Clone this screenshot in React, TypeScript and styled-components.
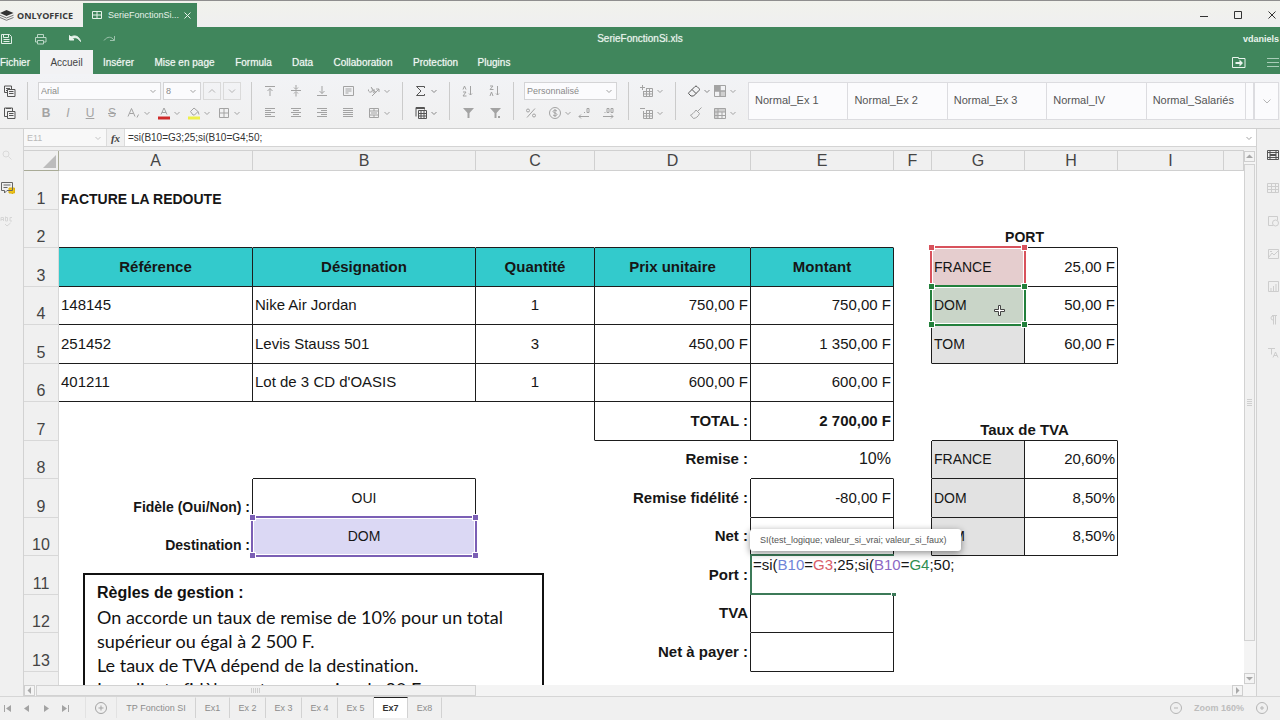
import React from 'react';
import styled, { createGlobalStyle, css } from 'styled-components';

const ui = '"Liberation Sans", Arial, sans-serif';

const Global = createGlobalStyle`
  *, *::before, *::after { box-sizing: border-box; }
  body { margin: 0; background: #f0f0f0; font-family: ${ui}; }
  button, input, select { font: inherit; color: inherit; margin: 0; }
  button { border: 0; padding: 0; background: none; }
`;

const Shell = styled.div`
  height: 100vh;
  min-height: 480px;
  display: flex;
  flex-direction: column;
  overflow: hidden;
  color: #444;
`;

/* ---------- icons ---------- */

type IconProps = { d: string; size?: number; color?: string; fill?: string; extra?: React.ReactNode; w?: number };

const Svg = styled.svg`
  display: block;
  flex: none;
`;

const Icon = ({ d, size = 14, color = '#a3a3a3', fill = 'none', extra, w = 1 }: IconProps) => (
  <Svg width={size} height={size} viewBox={`0 0 ${size} ${size}`} fill={fill} stroke={color} strokeWidth={w} aria-hidden="true">
    {extra}
    <path d={d} />
  </Svg>
);

const Caret = ({ color = '#a3a3a3' }: { color?: string }) => (
  <Svg width="8" height="8" viewBox="0 0 8 8" fill="none" stroke={color} aria-hidden="true">
    <path d="M1.5 3 4 5.5 6.5 3" />
  </Svg>
);

/* ---------- window title bar ---------- */

const TitleBar = styled.header`
  flex: none;
  height: 27px;
  border-top: 1px solid #8e8e8e;
  background: linear-gradient(#f1f2ec, #efeff0);
  display: flex;
  align-items: stretch;
`;

const Brand = styled.div`
  width: 83px;
  display: flex;
  align-items: center;
  gap: 3px;
  padding-top: 2px;
  font: 700 9px "Open Sans", sans-serif;
  color: #3a3a3a;
`;

const DocTab = styled.div`
  width: 114px;
  margin-top: 2px;
  padding: 0 6px 0 7px;
  background: #40865c;
  color: #e6f2ea;
  display: flex;
  align-items: center;
  gap: 4px;
  font-size: 9px;
  white-space: nowrap;
  span { flex: 1; }
`;

const WindowButtons = styled.div`
  margin-left: auto;
  display: flex;
  align-items: center;
  gap: 20px;
  padding: 2px 1px 0 0;
`;

/* ---------- green header ---------- */

const Header = styled.div`
  flex: none;
  background: #40865c;
  color: #e9f4ed;
`;

const QuickRow = styled.div`
  height: 23px;
  display: grid;
  grid-template-columns: 1fr auto 1fr;
  align-items: center;
`;

const QuickActions = styled.div`
  display: flex;
  gap: 20px;
`;

const DocName = styled.div`
  font-size: 10px;
  text-shadow: 0 0 1px rgba(255, 255, 255, 0.6);
`;

const User = styled.div`
  justify-self: end;
  padding-right: 1px;
  font-size: 9px;
  font-weight: 700;
`;

const TabRow = styled.nav`
  height: 24px;
  display: flex;
`;

const RibbonTab = styled.button<{ $active?: boolean; $first?: boolean; $w: number }>`
  width: ${p => p.$w}px;
  text-align: ${p => (p.$first ? 'left' : 'center')};
  font-size: 10px;
  color: #f2f8f4;
  text-shadow: 0 0 1px rgba(255, 255, 255, 0.6);
  ${p => p.$active && css`
    background: #f2f2f4;
    color: #444;
    text-shadow: none;
  `}
`;

const TabActions = styled.div`
  margin-left: auto;
  display: flex;
  align-items: center;
  gap: 19px;
`;

/* ---------- toolbar ---------- */

const Toolbar = styled.div`
  flex: none;
  height: 55px;
  display: flex;
  align-items: flex-start;
  padding-top: 6px;
  background: linear-gradient(#f2f3f6, #f0f0f0);
  border-bottom: 1px solid #cfcfcf;
`;

const Group = styled.div<{ $w: number; $pad: number }>`
  flex: none;
  width: ${p => p.$w}px;
  padding-left: ${p => p.$pad}px;
`;

const ToolRow = styled.div<{ $gap?: number; $pad?: number }>`
  height: 22px;
  display: flex;
  align-items: center;
  gap: ${p => p.$gap ?? 0}px;
  padding-left: ${p => p.$pad ?? 0}px;
`;

const Separator = styled.div`
  flex: none;
  width: 1px;
  height: 38px;
  margin-top: 2px;
  background: #cbcbcb;
`;

const Tool = styled.button<{ $w: number }>`
  width: ${p => p.$w}px;
  height: 20px;
  display: flex;
  align-items: center;
  justify-content: center;
  font-size: 12px;
  color: #a3a3a3;
`;

const IconBox = styled.span`
  width: 18px;
  display: flex;
  justify-content: center;
`;

const Split = ({ w = 30, label, caret, children }: { w?: number; label: string; caret?: string; children: React.ReactNode }) => (
  <Tool $w={w} aria-label={label}>
    <IconBox>{children}</IconBox>
    <Caret color={caret} />
  </Tool>
);

const Combo = styled.label<{ $w: number }>`
  width: ${p => p.$w}px;
  height: 18px;
  display: flex;
  align-items: center;
  padding-right: 3px;
  border: 1px solid #d4d4d6;
  background: #fbfbfd;
  color: #8a8a8a;
  font-size: 9px;
  select {
    flex: 1;
    min-width: 0;
    appearance: none;
    border: 0;
    padding: 0 0 0 2px;
    background: none;
    outline: 0;
  }
`;

const StepButton = styled.button`
  width: 18px;
  height: 18px;
  display: grid;
  place-items: center;
  border: 1px solid #dadada;
`;

const Gallery = styled.div`
  flex: 1;
  min-width: 0;
  height: 38px;
  margin-top: 2px;
  display: flex;
  border: 1px solid #dcdce0;
  background: #fbfbfd;
`;

const StyleCell = styled.button`
  flex: 1 1 0;
  padding: 0 0 2px 6px;
  text-align: left;
  font-size: 11px;
  color: #555;
  white-space: nowrap;
  border-right: 1px solid #dcdce0;
`;

const GalleryMore = styled.button`
  width: 25px;
  height: 38px;
  margin: 2px 1px 0 0;
  display: grid;
  place-items: center;
  border: 1px solid #dcdce0;
  background: #fbfbfd;
`;

/* ---------- work area ---------- */

const Work = styled.div`
  flex: 1;
  min-height: 0;
  display: flex;
`;

const SidePanel = styled.aside<{ $side: 'left' | 'right' }>`
  flex: none;
  width: 23px;
  padding-top: 17px;
  padding-left: ${p => (p.$side === 'left' ? 0 : 9)}px;
  display: flex;
  flex-direction: column;
  gap: 16px;
  background: #f0f0f0;
  overflow: hidden;
  button { height: 17px; flex: none; display: flex; align-items: center; }
`;

const Center = styled.main`
  flex: 1;
  min-width: 0;
  display: flex;
  flex-direction: column;
  border-left: 1px solid #d2d2d2;
  border-right: 1px solid #d2d2d2;
`;

const FormulaBar = styled.div`
  flex: none;
  height: 18px;
  margin-bottom: 3px;
  display: flex;
  border-bottom: 1px solid #d4d4d4;
`;

const NameBox = styled.label`
  width: 82px;
  display: flex;
  align-items: center;
  padding-right: 4px;
  background: #f8f8f8;
  color: #b8b8b8;
  font-size: 9px;
  input { flex: 1; min-width: 0; border: 0; background: none; outline: 0; padding: 0 0 0 3px; }
`;

const FxButton = styled.button`
  width: 19px;
  border-left: 1px solid #dcdcdc;
  border-right: 1px solid #dcdcdc;
  font: italic 700 11px "Liberation Serif", serif;
  color: #444;
`;

const FormulaInput = styled.label`
  flex: 1;
  display: flex;
  align-items: center;
  background: #fff;
  padding-right: 3px;
  input {
    flex: 1;
    min-width: 0;
    border: 0;
    outline: 0;
    padding: 0 0 1px 3px;
    background: none;
    font-size: 10px;
    color: #333;
  }
`;

const SheetRow = styled.div`
  flex: 1;
  min-height: 0;
  display: flex;
`;

const Viewport = styled.div`
  flex: 1;
  min-width: 0;
  position: relative;
  overflow: hidden;
  background: #fff;
`;

const Grid = styled.table`
  width: 100%;
  table-layout: fixed;
  border-collapse: separate;
  border-spacing: 0;
  border-top: 1px solid #d0d0d0;
`;

const ColHead = styled.th`
  height: 20px;
  padding: 0;
  background: #f0f0f0;
  border-right: 1px solid #d0d0d0;
  border-bottom: 1px solid #d0d0d0;
  font-size: 16px;
  font-weight: 400;
  line-height: 18px;
  color: #444;
`;

const Corner = styled(ColHead)`
  border-right-color: #a9ab97;
  border-bottom-color: #a9ab97;
  svg { margin: 2px 2px 0 auto; }
`;

const RowHead = styled.th`
  padding: 0 0 1px;
  background: #f0f0f0;
  border-right: 1px solid #d8d8d8;
  border-bottom: 1px solid #d8d8d8;
  font-size: 16px;
  font-weight: 400;
  line-height: 18px;
  vertical-align: bottom;
  color: #444;
`;

const Row = styled.tr<{ $h: number }>`
  height: ${p => p.$h}px;
`;

type CellStyle = { $r?: boolean; $b?: boolean; $align?: string; $bold?: boolean; $bottom?: boolean; $bg?: string; $size?: number };

const Cell = styled.td<CellStyle>`
  position: relative;
  padding: 0 2px 1px;
  border: 0 solid transparent;
  border-right: 1px solid ${p => (p.$r ? '#1d1d1d' : 'transparent')};
  border-bottom: 1px solid ${p => (p.$b ? '#1d1d1d' : 'transparent')};
  background: ${p => p.$bg ?? 'transparent'};
  text-align: ${p => p.$align ?? 'left'};
  vertical-align: ${p => (p.$bottom ? 'bottom' : 'middle')};
  font-size: ${p => p.$size ?? 15}px;
  font-weight: ${p => (p.$bold ? 700 : 400)};
  line-height: 18px;
  white-space: nowrap;
  color: #161616;
`;

const RangeFrame = styled.div<{ $color: string }>`
  position: absolute;
  inset: -2px;
  border: 2px solid ${p => p.$color};
  box-shadow: inset 0 0 0 1px #fff;
  z-index: 1;
  i {
    position: absolute;
    width: 5px;
    height: 5px;
    background: ${p => p.$color};
    box-shadow: 0 0 0 1px #fff;
  }
  i:nth-child(1) { top: -3px; left: -3px; }
  i:nth-child(2) { top: -3px; right: -3px; }
  i:nth-child(3) { bottom: -3px; left: -3px; }
  i:nth-child(4) { bottom: -3px; right: -3px; }
`;

const Range = ({ color }: { color: string }) => (
  <RangeFrame $color={color}><i /><i /><i /><i /></RangeFrame>
);

const Editor = styled.div`
  position: absolute;
  z-index: 3;
  top: 0;
  left: 0;
  height: 38px;
  min-width: 205px;
  padding-left: 2px;
  background: #fff;
  text-align: left;
  line-height: 18px;
`;

const ActiveFrame = styled.div`
  position: absolute;
  z-index: 4;
  inset: -2px -1px -1px -1px;
  border: 2px solid #3c7a58;
  border-right: 0;
  &::after {
    content: '';
    position: absolute;
    right: -2px;
    bottom: -3px;
    width: 5px;
    height: 3px;
    background: #3c7a58;
    border-left: 1px solid #fff;
  }
`;

const Tooltip = styled.div`
  position: absolute;
  z-index: 5;
  left: -1px;
  bottom: 4px;
  height: 22px;
  padding: 0 14px 0 10px;
  border-radius: 3px;
  background: #fff;
  box-shadow: 0 2px 7px rgba(0, 0, 0, 0.45);
  font-size: 9px;
  line-height: 22px;
  color: #555;
`;

const Ref = styled.span<{ $c: string }>`
  color: ${p => p.$c};
`;

const Pointer = styled.svg`
  position: absolute;
  z-index: 2;
  right: 18px;
  bottom: 7px;
`;

const RulesBox = styled.div`
  position: absolute;
  left: 59px;
  top: 423px;
  width: 461px;
  height: 190px;
  padding: 4px 12px;
  border: 2px solid #111;
  background: #fff;
  font: 18px/24px Lato, sans-serif;
  font-variant-ligatures: none;
  color: #111;
  p { margin: 0; white-space: nowrap; }
  strong { font: 700 16px/24px ${ui}; }
`;

/* ---------- scroll bars ---------- */

const Bar = styled.div<{ $vertical?: boolean }>`
  flex: none;
  display: flex;
  flex-direction: ${p => (p.$vertical ? 'column' : 'row')};
  ${p => (p.$vertical ? 'width: 12px; padding: 1px 0 1px;' : 'height: 11px; padding-right: 13px;')}
  background: #f4f4f4;
`;

const Arrow = styled.button`
  flex: none;
  width: 11px;
  height: 11px;
  display: grid;
  place-items: center;
  border: 1px solid #cfcfcf;
`;

const Thumb = styled.div<{ $grow: number; $vertical?: boolean }>`
  flex: ${p => p.$grow} 1 0;
  ${p => (p.$vertical ? 'width: 11px; margin-top: 2px;' : 'height: 11px; margin-left: 1px;')}
  display: grid;
  place-items: center;
  border: 1px solid #d2d2d2;
  background: #f1f1f1;
`;

const Track = styled.div<{ $grow: number }>`
  flex: ${p => p.$grow} 1 0;
`;

/* ---------- status bar ---------- */

const StatusBar = styled.footer`
  flex: none;
  height: 24px;
  display: flex;
  align-items: stretch;
  padding-bottom: 2px;
  border-top: 1px solid #d6d6d6;
  font-size: 9px;
  color: #8c8c8c;
`;

const NavButtons = styled.div`
  width: 85px;
  display: flex;
  align-items: center;
  gap: 5px;
  padding-left: 1px;
  button { width: 14px; display: grid; place-items: center; }
`;

const AddSheet = styled.button`
  width: 32px;
  display: grid;
  place-items: center;
  border-left: 1px solid #e2e2e2;
  border-right: 1px solid #e2e2e2;
`;

const SheetTab = styled.button<{ $w: number; $active?: boolean }>`
  width: ${p => p.$w}px;
  height: 21px;
  border-right: 1px solid #d2d2d2;
  border-top: 1px solid transparent;
  ${p => p.$active && css`
    background: #fff;
    border-top-color: #222;
    font-weight: 700;
    color: #333;
  `}
`;

const ZoomBox = styled.div`
  margin-left: auto;
  display: flex;
  align-items: center;
  gap: 11px;
  padding-right: 11px;
  font-weight: 700;
  color: #bdbdbd;
`;

/* ---------- data ---------- */

const ribbon: [string, number][] = [
  ['Fichier', 40], ['Accueil', 53], ['Insérer', 51], ['Mise en page', 81], ['Formula', 57], ['Data', 41],
  ['Collaboration', 80], ['Protection', 65], ['Plugins', 52],
];

const widths = [35, 194, 223, 119, 156, 143, 38, 93, 93, 106];
const letters = ['A', 'B', 'C', 'D', 'E', 'F', 'G', 'H', 'I', ''];

const GREY = '#e2e2e2';
const TEAL = '#33cacc';

type C = CellStyle & { t?: React.ReactNode; span?: number };
const gap: C = {};
const edge: C = { $r: true };

const item = (ref: string, name: string, qty: string, price: string, total: string): C[] => [
  { t: ref, $r: true, $b: true },
  { t: name, $r: true, $b: true },
  { t: qty, $r: true, $b: true, $align: 'center' },
  { t: price, $r: true, $b: true, $align: 'right' },
  { t: total, $r: true, $b: true, $align: 'right' },
];

const rate = (zone: React.ReactNode, value: string, bg = GREY): C[] => [
  edge,
  { t: zone, $r: true, $b: true, $bg: bg, $size: 14 },
  { t: value, $r: true, $b: true, $align: 'right' },
];

const head = (t: string): C => ({ t, $r: true, $b: true, $bold: true, $align: 'center', $bg: TEAL });
const label = (t: string, box = true): C => ({ t, $r: box, $bold: true, $align: 'right' });

const editor = (
  <>
    <Editor>
      =si(<Ref $c="#6f84d8">B10</Ref>=<Ref $c="#d9606a">G3</Ref>;25;si(<Ref $c="#8c68c4">B10</Ref>=<Ref $c="#2f8f52">G4</Ref>;50;
    </Editor>
    <ActiveFrame />
  </>
);

const tip = <Tooltip role="tooltip">SI(test_logique; valeur_si_vrai; valeur_si_faux)</Tooltip>;

const cursor = (
  <Pointer width="13" height="13" viewBox="0 0 13 13" fill="#fff" stroke="#444">
    <path d="M5.5 1.5h2v4h4v2h-4v4h-2v-4h-4v-2h4z" />
  </Pointer>
);

const rows: C[][] = [
  [{ t: 'FACTURE LA REDOUTE', $bold: true, $bottom: true, $size: 14 }],
  [
    { $b: true }, { $b: true }, { $b: true }, { $b: true }, { $b: true }, gap,
    { t: 'PORT', span: 2, $b: true, $bold: true, $bottom: true, $align: 'center', $size: 14 },
  ],
  [
    head('Référence'), head('Désignation'), head('Quantité'), head('Prix unitaire'), head('Montant'),
    ...rate(<>FRANCE<Range color="#d8525c" /></>, '25,00 F', '#e5cdce'),
  ],
  [
    ...item('148145', 'Nike Air Jordan', '1', '750,00 F', '750,00 F'),
    ...rate(<>DOM<Range color="#23803c" />{cursor}</>, '50,00 F', '#c9d5c8'),
  ],
  [...item('251452', 'Levis Stauss 501', '3', '450,00 F', '1 350,00 F'), ...rate('TOM', '60,00 F')],
  item('401211', "Lot de 3 CD d'OASIS", '1', '600,00 F', '600,00 F'),
  [
    gap, gap, edge,
    { t: 'TOTAL :', $r: true, $b: true, $bold: true, $align: 'right' },
    { t: '2 700,00 F', $r: true, $b: true, $bold: true, $align: 'right' },
    gap,
    { t: 'Taux de TVA', span: 2, $b: true, $bold: true, $bottom: true, $align: 'center' },
  ],
  [
    gap, { $b: true }, gap, label('Remise :', false), { t: '10%', $b: true, $align: 'right', $size: 16 },
    ...rate('FRANCE', '20,60%'),
  ],
  [
    { t: 'Fidèle (Oui/Non) :', $r: true, $bold: true, $bottom: true, $align: 'right', $size: 14 },
    { t: 'OUI', $r: true, $b: true, $align: 'center', $size: 14 }, gap,
    label('Remise fidélité :'), { t: '-80,00 F', $r: true, $b: true, $align: 'right' },
    ...rate('DOM', '8,50%'),
  ],
  [
    { t: 'Destination :', $r: true, $bold: true, $bottom: true, $align: 'right', $size: 14 },
    { t: <>DOM<Range color="#7b5fb5" /></>, $r: true, $b: true, $align: 'center', $size: 14, $bg: '#dbd8f4' }, gap,
    label('Net :'), { t: tip, $r: true, $b: true },
    ...rate('TOM', '8,50%'),
  ],
  [gap, gap, gap, label('Port :'), { t: editor, $b: true, $r: true }],
  [gap, gap, gap, label('TVA'), { $r: true, $b: true }],
  [gap, gap, gap, label('Net à payer :'), { $r: true, $b: true }],
  [],
];

const styleNames = ['Normal_Ex 1', 'Normal_Ex 2', 'Normal_Ex 3', 'Normal_IV', 'Normal_Salariés'];

const sheets: [string, number][] = [
  ['TP Fonction SI', 79], ['Ex1', 34], ['Ex 2', 36], ['Ex 3', 36], ['Ex 4', 36], ['Ex 5', 36], ['Ex7', 34], ['Ex8', 34],
];

const dark = '#555';
const pale = '#cdcdcd';

/* ---------- sections ---------- */

const TopBar = () => (
  <TitleBar>
    <Brand>
      <Svg width="14" height="12" viewBox="0 0 14 12" aria-hidden="true">
        <path d="M0 4 6.500 1l7 3-7 3z" fill="#333" />
        <path d="M0 6.200 6.500 9l7-2.800M0 8.500l6.500 2.800 7-2.800" fill="none" stroke="#777" />
      </Svg>
      ONLYOFFICE
    </Brand>
    <DocTab>
      <Icon size={14} color="#e6f2ea" d="M2.500 3.500h9v7h-9zM2.500 7h9M7 3.500v7" />
      <span>SerieFonctionSi...</span>
      <Icon size={9} color="#e6f2ea" d="M1.500 1.500l6 6M7.500 1.500l-6 6" />
    </DocTab>
    <WindowButtons>
      <button aria-label="Réduire"><Icon size={14} color="#333" d="M3 8.500h8" /></button>
      <button aria-label="Agrandir"><Icon size={14} color="#333" d="M3.500 3.500h7v7h-7z" /></button>
      <button aria-label="Fermer"><Icon size={14} color="#333" d="M3.500 3.500l7 7M10.500 3.500l-7 7" /></button>
    </WindowButtons>
  </TitleBar>
);

const GreenHeader = () => (
  <Header>
    <QuickRow>
      <QuickActions>
        <button aria-label="Enregistrer"><Icon color="#e0efe6" d="M1.500 2.500h8l2 2v7h-10zM3.500 2.500v3h5v-3M3.500 7.500h6M3.500 9.500h6" /></button>
        <button aria-label="Imprimer"><Icon color="#b9d6c5" d="M3.500 5V2.500h6V5M3.500 10h-2V5.500h10.500v4.500h-2M3.500 8.500h6v3.500h-6z" /></button>
        <button aria-label="Annuler"><Icon color="#e9f4ed" fill="#e9f4ed" d="M1.500 3.500v4.500h4.500L4.500 6.500C7 5 10 5.500 12.500 9.500 11.500 4.500 7 2.500 3 5z" /></button>
        <button aria-label="Rétablir"><Icon color="#9cc2ac" d="M12.500 4v4.500H8M12 8C9.500 4.500 5.500 4 2 8.500" /></button>
      </QuickActions>
      <DocName>SerieFonctionSi.xls</DocName>
      <User>vdaniels</User>
    </QuickRow>
    <TabRow>
      {ribbon.map(([name, w], i) => (
        <RibbonTab key={name} $w={w} $first={i === 0} $active={i === 1}>{name}</RibbonTab>
      ))}
      <TabActions>
        <button aria-label="Ouvrir l'emplacement"><Icon size={16} color="#e9f4ed" d="M1.500 3.500h6v1h6.500v9H1.500z" extra={<path d="M4.500 8h4V5.500L12 9l-3.500 3.500V10h-4z" fill="#e9f4ed" stroke="none" />} /></button>
        <button aria-label="Affichage"><Icon size={14} color="#a9cdb8" d="M1 3.500h12M1 7.500h12M1 11.500h12" /></button>
      </TabActions>
    </TabRow>
  </Header>
);

const Ribbon = () => (
  <Toolbar>
    <Group $w={27} $pad={0}>
      <ToolRow><Tool $w={18} aria-label="Copier"><Icon color={dark} d="M5 8.500H2.500v-6.500h7V5M4 4.500h4M4 6.500h1M5.500 5.500h7.500v7h-7.500zM7 7.500h4.500M7 9.500h4.500" /></Tool></ToolRow>
      <ToolRow><Tool $w={18} aria-label="Coller"><Icon color={dark} d="M5 10.500H2.500v-8.500h8V5M4 2.500h5M5.500 5.500h7.500v7h-7.500zM7 7.500h4.500M7 9.500h4.500" /></Tool></ToolRow>
    </Group>
    <Separator />
    <Group $w={223} $pad={7}>
      <ToolRow $gap={2} $pad={3}>
        <Combo $w={123}><select aria-label="Police" defaultValue="Arial"><option>Arial</option></select><Caret /></Combo>
        <Combo $w={38}><select aria-label="Taille" defaultValue="8"><option>8</option></select><Caret /></Combo>
        <StepButton aria-label="Augmenter la taille"><Icon size={10} color="#b5b5b5" d="M2 6.500 5 3.500 8 6.500" /></StepButton>
        <StepButton aria-label="Diminuer la taille"><Icon size={10} color="#b5b5b5" d="M2 3.500 5 6.500 8 3.500" /></StepButton>
      </ToolRow>
      <ToolRow>
        <Tool $w={22}><b>B</b></Tool>
        <Tool $w={22}><i>I</i></Tool>
        <Tool $w={22}><u>U</u></Tool>
        <Tool $w={22}><s>S</s></Tool>
        <Split label="Indice"><Icon d="M1 10.500 4.500 2.500 8 10.500M2.500 7.500h4M10 11.500l1.500-3" /></Split>
        <Split label="Couleur de police"><Icon d="M4 8.500 7 2 10 8.500M5 6.500h4" extra={<path d="M1 12h12" stroke="#cf2a2a" strokeWidth="3" />} /></Split>
        <Split label="Couleur de fond"><Icon d="M3.500 5.500 7 2l4 3.500-3.500 3.500h-1.500zM11 5.500l1 3" extra={<path d="M1 12h12" stroke="#eef04a" strokeWidth="3" />} /></Split>
        <Split label="Bordures"><Icon d="M2.500 2.500h9v9h-9zM7 3v8M3 7h8" /></Split>
      </ToolRow>
    </Group>
    <Separator />
    <Group $w={150} $pad={5}>
      <ToolRow>
        <Tool $w={26} aria-label="Aligner en haut"><Icon d="M2 2.500h10M7 12V4.500M4.500 7 7 4.500 9.500 7" /></Tool>
        <Tool $w={26} aria-label="Aligner au milieu"><Icon d="M2 6.500h10M7 1v4M5 3.500 7 5.500 9 3.500M7 12.500v-4M5 9.500 7 7.500 9 9.500" /></Tool>
        <Tool $w={26} aria-label="Aligner en bas"><Icon d="M2 11.500h10M7 2v7.500M4.500 7 7 9.500 9.500 7" /></Tool>
        <Tool $w={26} aria-label="Renvoyer à la ligne"><Icon d="M2.500 2.500h10v9h-10zM4.500 5h6M4.500 7h6M4.500 9h3" /></Tool>
        <Split w={34} label="Orientation"><Icon d="M1.500 5.500a2 2 0 1 0 3-1M4 3l4 5M8 6a1.500 1.500 0 1 0 1 1M5 12l7-7M12 8V5H9" /></Split>
      </ToolRow>
      <ToolRow>
        <Tool $w={26} aria-label="Aligner à gauche"><Icon d="M2 2.500h10M2 4.500h6M2 6.500h10M2 8.500h6M2 10.500h10" /></Tool>
        <Tool $w={26} aria-label="Centrer"><Icon d="M2 2.500h10M4 4.500h6M2 6.500h10M4 8.500h6M2 10.500h10" /></Tool>
        <Tool $w={26} aria-label="Aligner à droite"><Icon d="M2 2.500h10M6 4.500h6M2 6.500h10M6 8.500h6M2 10.500h10" /></Tool>
        <Tool $w={26} aria-label="Justifier"><Icon d="M2 2.500h10M2 4.500h10M2 6.500h10M2 8.500h10M2 10.500h10" /></Tool>
        <Split w={34} label="Fusionner"><Icon d="M2.500 2.500h9v9h-9zM2.500 5h9M2.500 9h9M7 2.500v2.500M7 9v2.500M4 7h6" /></Split>
      </ToolRow>
    </Group>
    <Separator />
    <Group $w={46} $pad={7}>
      <ToolRow><Split label="Somme" caret="#888"><Icon color={dark} d="M10.500 4V2.500h-8L7 7l-4.500 4.500h8V10" /></Split></ToolRow>
      <ToolRow><Split label="Plages nommées" caret="#888"><Icon color={dark} d="M2 10.500V1.500h8.500v2M2 2.500h8.500M4.500 4.500h8v8h-8zM4.500 7.500h8M4.500 10h8M7 4.500v8M10 4.500v8" /></Split></ToolRow>
    </Group>
    <Separator />
    <Group $w={63} $pad={4}>
      <ToolRow>
        <Tool $w={27} aria-label="Tri croissant"><Icon d="M2 5.500 3.500 2 5 5.500M2 8h3L2 12h3.500M9.500 2v9M8 9.500l1.500 1.500L11 9.500" /></Tool>
        <Tool $w={27} aria-label="Tri décroissant"><Icon d="M2 2h3L2 5.500h3.500M2 12l1.500-4L5 12M9.500 2v9M8 9.500l1.500 1.500L11 9.500" /></Tool>
      </ToolRow>
      <ToolRow>
        <Tool $w={27} aria-label="Filtrer"><Icon fill="#a3a3a3" color="none" d="M2 2h11L8.500 7v5h-2V7z" /></Tool>
        <Tool $w={27} aria-label="Effacer le filtre"><Icon fill="#a3a3a3" color="none" d="M2 2h11L8.500 7v5h-2V7zM10 10h2v2h-2z" /></Tool>
      </ToolRow>
    </Group>
    <Separator />
    <Group $w={114} $pad={10}>
      <ToolRow>
        <Combo $w={93}><select aria-label="Format" defaultValue="Personnalisé"><option>Personnalisé</option></select><Caret /></Combo>
      </ToolRow>
      <ToolRow>
        <Tool $w={16} aria-label="Pourcentage"><Icon d="M3 11.500 11 2.500M2.500 4.500a1.500 1.500 0 1 0 3 0 1.500 1.500 0 1 0-3 0M8.500 9.500a1.500 1.500 0 1 0 3 0 1.500 1.500 0 1 0-3 0" /></Tool>
        <Split w={46} label="Comptabilité"><Icon d="M1.500 7a5.500 5.500 0 1 0 11 0 5.500 5.500 0 1 0-11 0M9 5C8 4 5 4 5 5.500S9 7 9 8.500 6 10 5 9M7 3v8" /></Split>
        <Tool $w={8} aria-label="Réduire les décimales"><Icon d="M2 10.500h10M4 8.500l-2 2 2 2M10 2.500h2v4h-2zM7 6.500h1" /></Tool>
        <Tool $w={44} aria-label="Ajouter une décimale"><Icon d="M2 10.500h10M10 8.500l2 2-2 2M6 2.500h2v4H6zM10 2.500h2v4h-2zM3.500 6.500h1" /></Tool>
      </ToolRow>
    </Group>
    <Separator />
    <Group $w={46} $pad={7}>
      <ToolRow><Split label="Insérer des cellules"><Icon d="M0 3.500h5M2.500 1v5M6 4.500h6.500v8h-9V7M3.500 10h9M6.500 5v7.500M9.500 4.500v8M3.500 7.500h9" /></Split></ToolRow>
      <ToolRow><Split label="Supprimer des cellules"><Icon d="M0 2.500h5M6 4.500h6.500v8h-9V5M3.500 10h9M6.500 5v7.500M9.500 4.500v8M3.500 7.500h9" /></Split></ToolRow>
    </Group>
    <Separator />
    <Group $w={72} $pad={9}>
      <ToolRow>
        <Split w={26} label="Effacer" caret="#888"><Icon color={dark} d="M2 8.500 8 2.500Q9 1.500 10 2.500L12 4.500Q13 5.500 12 6.500L6.500 12H4L2 10Q1 9.300 2 8.500zM5 5.500l4 4" /></Split>
        <Split w={26} label="Mise en forme conditionnelle"><Icon d="M1.500 1.500h11v11h-11zM7 1.500v11M1.500 7h11" extra={<><path d="M1.500 1.500H7V7H1.500z" fill="#a3a3a3" /><path d="M7 7h5.500v5.500H7z" fill="#cfcfcf" /></>} /></Split>
      </ToolRow>
      <ToolRow>
        <Tool $w={26} aria-label="Copier le style"><Icon size={22} d="M14.500 5.500 10.500 9.500M9 8l3.500 3.500C11 15 9 16 6.500 16.500L3.500 13C5 12.500 7 11 9 8z" /></Tool>
        <Split w={26} label="Modèle de tableau"><Icon d="M1.500 2.500h11v10h-11zM1.500 6h11M1.500 9.500h11M5 2.500v10M9 6v6.500" extra={<path d="M1.500 2.500h11V6h-11zM1.500 6H5v6.500H1.500z" fill="#cfcfcf" stroke="none" />} /></Split>
      </ToolRow>
    </Group>
    <Gallery>
      {styleNames.map(n => <StyleCell key={n}>{n}</StyleCell>)}
      <Svg width="7" height="36" aria-hidden="true" />
    </Gallery>
    <GalleryMore aria-label="Plus de styles"><Icon size={12} color="#b5b5b5" d="M2.500 4.500 6 8l3.500-3.500" /></GalleryMore>
  </Toolbar>
);

const Sheet = () => (
  <Viewport>
    <Grid>
      <colgroup>
        {widths.map((w, i) => <col key={i} width={w} />)}
        <col />
      </colgroup>
      <thead>
        <tr>
          <Corner aria-label="Tout sélectionner">
            <Svg width="13" height="13" viewBox="0 0 13 13" aria-hidden="true"><path d="M13 0v13H0z" fill="#bcbcbc" /></Svg>
          </Corner>
          {letters.map((l, i) => <ColHead key={i} scope="col">{l}</ColHead>)}
        </tr>
      </thead>
      <tbody>
        {rows.map((cells, r) => (
          <Row key={r} $h={r % 2 ? 38 : 39}>
            <RowHead scope="row">{r + 1}</RowHead>
            {cells.map(({ t, span, ...look }, c) => <Cell key={c} colSpan={span} {...look}>{t}</Cell>)}
          </Row>
        ))}
      </tbody>
    </Grid>
    <RulesBox>
      <p><strong>Règles de gestion :</strong></p>
      <p>On accorde un taux de remise de 10% pour un total</p>
      <p>supérieur ou égal à 2 500 F.</p>
      <p>Le taux de TVA dépend de la destination.</p>
      <p>Les clients fidèles ont une remise de 80 F.</p>
    </RulesBox>
  </Viewport>
);

const arrow = (d: string) => <Icon size={7} color="none" fill="#a8a8a8" d={d} />;

const navIcons: [string, string][] = [
  ['Première feuille', 'M2 3h1v7H2zM9 3v7L4 6.500z'],
  ['Feuille précédente', 'M8 3v7L3 6.500z'],
  ['Feuille suivante', 'M4 3v7l5-3.500z'],
  ['Dernière feuille', 'M9 3h1v7H9zM3 3v7l5-3.500z'],
];

const rightIcons: [string, string][] = [
  ['Cellule', 'M1.500 2.500h11v9h-11zM1.500 4.500h11M1.500 9.500h11M4 2.500v9M10 2.500v9M4 6.500h6M4 7.500h6'],
  ['Tableau', 'M1.500 2.500h11v9h-11zM1.500 5.500h11M1.500 8.500h11M5.500 2.500v9M9.500 2.500v9'],
  ['Forme', 'M7 11.500H2.500v-9h9V6M6.500 9a3 3 0 1 0 6 0 3 3 0 1 0-6 0'],
  ['Image', 'M2.500 2.500h10v9h-10zM3 10l3-4 2 2 4-4M4 4.500h2'],
  ['Graphique', 'M2.500 1.500h10v10h-10zM5 11V8M7.500 11V6M10 11V4'],
  ['Paragraphe', 'M6 2.500h5M7.500 2.500v9M9.500 2.500v9M7 3a2 2 0 0 0 0 4'],
  ['TextArt', 'M2 2.500h7M5.500 2.500v6M7 11.500 9.500 6l2.500 5.500M8 9.500h3'],
];

export default function App() {
  return (
    <Shell>
      <Global />
      <TopBar />
      <GreenHeader />
      <Ribbon />
      <Work>
        <SidePanel $side="left">
          <button aria-label="Rechercher"><Icon color="#dadada" d="M3 6a3 3 0 1 0 6 0 3 3 0 1 0-6 0M8.500 8.500l3 3" /></button>
          <button aria-label="Commentaires">
            <Icon size={16} color="#666" d="M1.500 2.500h11v8H7L4.500 13v-2.500h-3zM3.500 5h7M3.500 7.500h4" extra={<path d="M9 8h5.500v5h-2v1l-1-1H9z" fill="#f0c419" stroke="#d8ae10" />} />
          </button>
          <button aria-label="Vérification orthographique"><Icon color="#d6d6d6" d="M1 7V3.500h2.500V7M1 5.500h2.500M5.500 2.500V7h2V3.500h-2M12 3.500h-2V7h2M5 10l2 2 3.500-3" /></button>
        </SidePanel>
        <Center>
          <FormulaBar>
            <NameBox><input aria-label="Zone de nom" defaultValue="E11" /><Caret color="#c4c4c4" /></NameBox>
            <FxButton aria-label="Insérer une fonction">fx</FxButton>
            <FormulaInput><input aria-label="Formule" defaultValue="=si(B10=G3;25;si(B10=G4;50;" /><Caret /></FormulaInput>
          </FormulaBar>
          <SheetRow>
            <Sheet />
            <Bar $vertical>
              <Arrow aria-label="Défiler vers le haut">{arrow('M0 5 3.500 1.500 7 5z')}</Arrow>
              <Thumb $vertical $grow={478}><Icon size={7} color="#cfcfcf" d="M1 .5h5M1 2.500h5M1 4.500h5M1 6.500h5" /></Thumb>
              <Track $grow={32} />
              <Arrow aria-label="Défiler vers le bas">{arrow('M0 2 3.500 5.500 7 2z')}</Arrow>
            </Bar>
          </SheetRow>
          <Bar>
            <Arrow aria-label="Défiler à gauche">{arrow('M5 0 1.500 3.500 5 7z')}</Arrow>
            <Thumb $grow={438}><Icon size={9} color="#cfcfcf" d="M.5 2v5M2.500 2v5M4.500 2v5M6.500 2v5M8.500 2v5" /></Thumb>
            <Track $grow={757} />
            <Arrow aria-label="Défiler à droite">{arrow('M2 0 5.500 3.500 2 7z')}</Arrow>
          </Bar>
        </Center>
        <SidePanel $side="right">
          {rightIcons.map(([name, d], i) => (
            <button key={name} aria-label={name}><Icon color={i ? pale : dark} d={d} /></button>
          ))}
        </SidePanel>
      </Work>
      <StatusBar>
        <NavButtons>
          {navIcons.map(([name, d]) => (
            <button key={name} aria-label={name}><Icon size={12} color="none" fill="#a3a3a3" d={d} /></button>
          ))}
        </NavButtons>
        <AddSheet aria-label="Ajouter une feuille"><Icon d="M1.500 7a5.500 5.500 0 1 0 11 0 5.500 5.500 0 1 0-11 0M4.500 7h5M7 4.500v5" /></AddSheet>
        {sheets.map(([name, w]) => <SheetTab key={name} $w={w} $active={name === 'Ex7'}>{name}</SheetTab>)}
        <ZoomBox>
          <button aria-label="Zoom arrière"><Icon color="#b5b5b5" d="M1.500 7a5.500 5.500 0 1 0 11 0 5.500 5.500 0 1 0-11 0M5 7h4" /></button>
          Zoom 160%
          <button aria-label="Zoom avant"><Icon color="#b5b5b5" d="M1.500 7a5.500 5.500 0 1 0 11 0 5.500 5.500 0 1 0-11 0M5 7h4M7 5v4" /></button>
        </ZoomBox>
      </StatusBar>
    </Shell>
  );
}
